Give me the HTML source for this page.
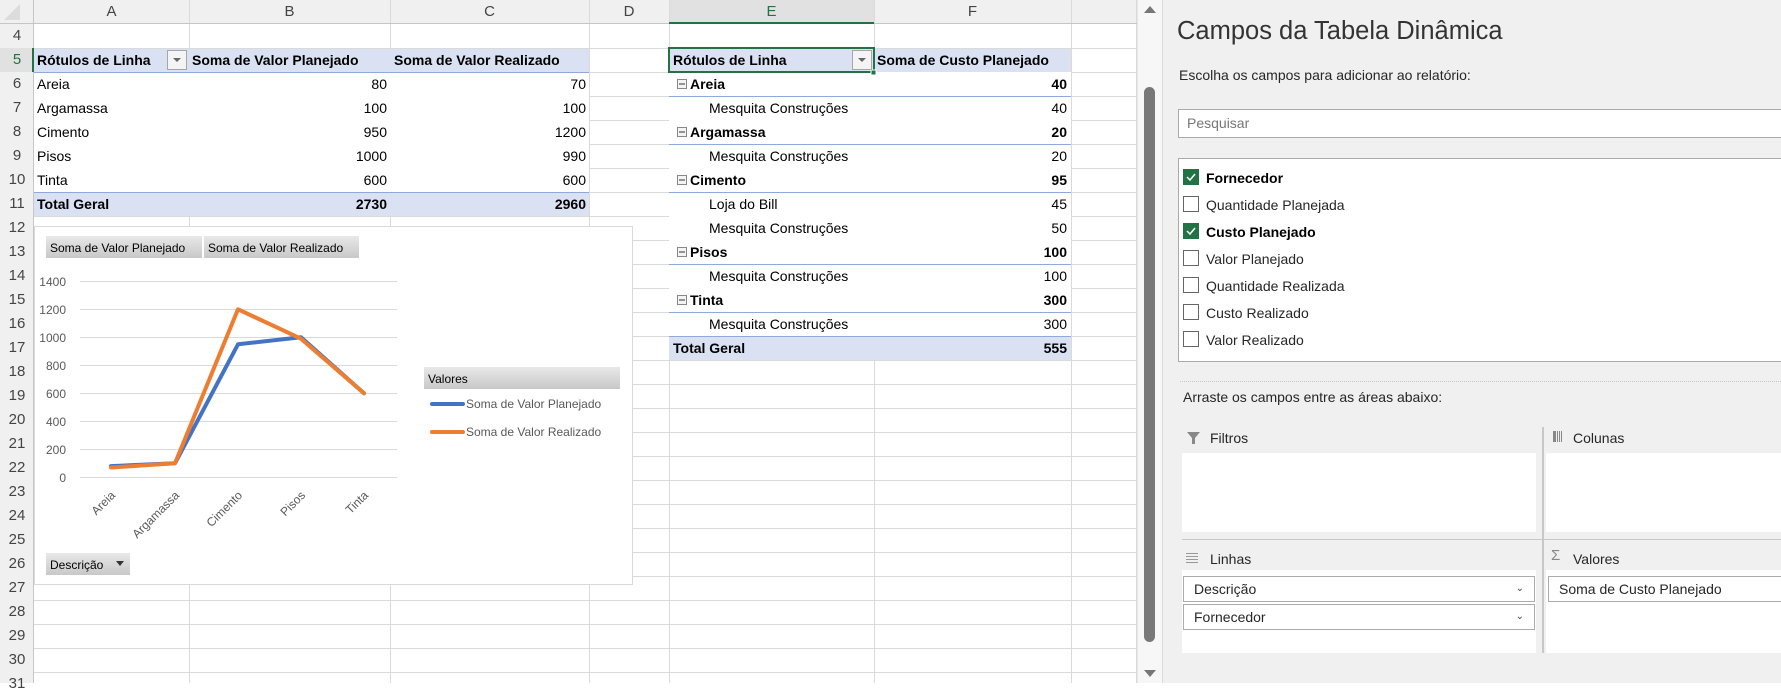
<!DOCTYPE html>
<html><head><meta charset="utf-8">
<style>
*{margin:0;padding:0;box-sizing:border-box}
body{width:1781px;height:683px;overflow:hidden;background:#fff;font-family:"Liberation Sans",Arial,sans-serif;position:relative}
.a{position:absolute;white-space:nowrap}
.t{font-size:14px;color:#000;line-height:24px;height:24px}
.b{font-weight:bold}
.r{text-align:right}
.ch{font-size:15px;color:#444;text-align:center;line-height:24px;top:0;height:24px}
.rh{font-size:15px;color:#444;text-align:center;width:34px;left:0;line-height:24px;height:24px}
.p{color:#262626}
.cb{position:absolute;width:16px;height:16px;border:1px solid #666;background:#fff}
.cb.on{background:#217346;border-color:#217346}
.dd{position:absolute;background:#fff;border:1px solid #ababab;font-size:15px;line-height:24px;padding-left:10px;color:#262626}
</style></head><body>
<svg class="a" style="left:0;top:0" width="1140" height="683">
<rect x="0" y="0" width="1140" height="24" fill="#f0f0f0"/>
<rect x="0" y="0" width="34" height="683" fill="#f0f0f0"/>
<rect x="669" y="0" width="205" height="24" fill="#e1e1e1"/>
<rect x="0" y="48" width="34" height="24" fill="#e1e1e1"/>
<g stroke="#dadada" stroke-width="1">
<line x1="34" y1="48.5" x2="1140" y2="48.5"/>
<line x1="34" y1="72.5" x2="1140" y2="72.5"/>
<line x1="34" y1="96.5" x2="1140" y2="96.5"/>
<line x1="34" y1="120.5" x2="1140" y2="120.5"/>
<line x1="34" y1="144.5" x2="1140" y2="144.5"/>
<line x1="34" y1="168.5" x2="1140" y2="168.5"/>
<line x1="34" y1="192.5" x2="1140" y2="192.5"/>
<line x1="34" y1="216.5" x2="1140" y2="216.5"/>
<line x1="34" y1="240.5" x2="1140" y2="240.5"/>
<line x1="34" y1="264.5" x2="1140" y2="264.5"/>
<line x1="34" y1="288.5" x2="1140" y2="288.5"/>
<line x1="34" y1="312.5" x2="1140" y2="312.5"/>
<line x1="34" y1="336.5" x2="1140" y2="336.5"/>
<line x1="34" y1="360.5" x2="1140" y2="360.5"/>
<line x1="34" y1="384.5" x2="1140" y2="384.5"/>
<line x1="34" y1="408.5" x2="1140" y2="408.5"/>
<line x1="34" y1="432.5" x2="1140" y2="432.5"/>
<line x1="34" y1="456.5" x2="1140" y2="456.5"/>
<line x1="34" y1="480.5" x2="1140" y2="480.5"/>
<line x1="34" y1="504.5" x2="1140" y2="504.5"/>
<line x1="34" y1="528.5" x2="1140" y2="528.5"/>
<line x1="34" y1="552.5" x2="1140" y2="552.5"/>
<line x1="34" y1="576.5" x2="1140" y2="576.5"/>
<line x1="34" y1="600.5" x2="1140" y2="600.5"/>
<line x1="34" y1="624.5" x2="1140" y2="624.5"/>
<line x1="34" y1="648.5" x2="1140" y2="648.5"/>
<line x1="34" y1="672.5" x2="1140" y2="672.5"/>
<line x1="189.5" y1="0" x2="189.5" y2="683"/>
<line x1="390.5" y1="0" x2="390.5" y2="683"/>
<line x1="589.5" y1="0" x2="589.5" y2="683"/>
<line x1="669.5" y1="0" x2="669.5" y2="683"/>
<line x1="874.5" y1="0" x2="874.5" y2="683"/>
<line x1="1071.5" y1="0" x2="1071.5" y2="683"/>
<line x1="1136.5" y1="0" x2="1136.5" y2="683"/>
</g>
<line x1="0" y1="23.5" x2="1140" y2="23.5" stroke="#c6c6c6"/>
<line x1="33.5" y1="0" x2="33.5" y2="683" stroke="#c6c6c6"/>
<line x1="669" y1="23" x2="874" y2="23" stroke="#217346" stroke-width="2"/>
<line x1="33" y1="48" x2="33" y2="72" stroke="#217346" stroke-width="2"/>
<polygon points="4,20 20,20 20,4" fill="#dcdcdc"/>
<!-- pivot 1 -->
<rect x="34" y="49" width="555" height="167" fill="#fff"/>
<rect x="34" y="49" width="555" height="23" fill="#d9e1f2"/>
<rect x="34" y="192" width="555" height="24" fill="#d9e1f2"/>
<line x1="34" y1="72.5" x2="589" y2="72.5" stroke="#8ea9db"/>
<line x1="34" y1="192.5" x2="589" y2="192.5" stroke="#8ea9db"/>
<!-- pivot 2 -->
<rect x="669" y="49" width="402" height="311" fill="#fff"/>
<rect x="669" y="49" width="402" height="23" fill="#d9e1f2"/>
<rect x="669" y="336" width="402" height="24" fill="#d9e1f2"/>
<g stroke="#8ea9db">
<line x1="669" y1="96.5" x2="1071" y2="96.5"/>
<line x1="669" y1="144.5" x2="1071" y2="144.5"/>
<line x1="669" y1="192.5" x2="1071" y2="192.5"/>
<line x1="669" y1="264.5" x2="1071" y2="264.5"/>
<line x1="669" y1="312.5" x2="1071" y2="312.5"/>
<line x1="669" y1="336.5" x2="1071" y2="336.5"/>
</g>
<rect x="669" y="48" width="205" height="24" fill="none" stroke="#217346" stroke-width="2"/>
<rect x="871" y="70" width="5" height="5" fill="#217346" stroke="#fff" stroke-width="1"/>
<rect x="167.5" y="50.5" width="19" height="19" fill="#f4f4f4" stroke="#a6a6a6"/>
<polygon points="173,58 181,58 177,62" fill="#666"/>
<rect x="852.5" y="50.5" width="19" height="19" fill="#f4f4f4" stroke="#a6a6a6"/>
<polygon points="858,58 866,58 862,62" fill="#666"/>
<g fill="#f4f4f4" stroke="#888">
<rect x="677.5" y="79.5" width="9" height="9"/><rect x="677.5" y="127.5" width="9" height="9"/>
<rect x="677.5" y="175.5" width="9" height="9"/><rect x="677.5" y="247.5" width="9" height="9"/>
<rect x="677.5" y="295.5" width="9" height="9"/></g>
<g stroke="#333"><line x1="679" y1="84" x2="685" y2="84"/><line x1="679" y1="132" x2="685" y2="132"/><line x1="679" y1="180" x2="685" y2="180"/><line x1="679" y1="252" x2="685" y2="252"/><line x1="679" y1="300" x2="685" y2="300"/></g>
</svg>
<div class="a ch" style="left:34px;width:155px">A</div>
<div class="a ch" style="left:189px;width:201px">B</div>
<div class="a ch" style="left:390px;width:199px">C</div>
<div class="a ch" style="left:589px;width:80px">D</div>
<div class="a ch" style="left:669px;width:205px;color:#217346">E</div>
<div class="a ch" style="left:874px;width:197px">F</div>
<div class="a rh" style="top:24px">4</div><div class="a rh" style="top:48px;color:#217346">5</div>
<div class="a rh" style="top:72px">6</div><div class="a rh" style="top:96px">7</div>
<div class="a rh" style="top:120px">8</div><div class="a rh" style="top:144px">9</div>
<div class="a rh" style="top:168px">10</div><div class="a rh" style="top:192px">11</div>
<div class="a rh" style="top:216px">12</div><div class="a rh" style="top:240px">13</div>
<div class="a rh" style="top:264px">14</div><div class="a rh" style="top:288px">15</div>
<div class="a rh" style="top:312px">16</div><div class="a rh" style="top:336px">17</div>
<div class="a rh" style="top:360px">18</div><div class="a rh" style="top:384px">19</div>
<div class="a rh" style="top:408px">20</div><div class="a rh" style="top:432px">21</div>
<div class="a rh" style="top:456px">22</div><div class="a rh" style="top:480px">23</div>
<div class="a rh" style="top:504px">24</div><div class="a rh" style="top:528px">25</div>
<div class="a rh" style="top:552px">26</div><div class="a rh" style="top:576px">27</div>
<div class="a rh" style="top:600px">28</div><div class="a rh" style="top:624px">29</div>
<div class="a rh" style="top:648px">30</div><div class="a rh" style="top:672px">31</div>
<div class="a t b" style="left:37px;top:48px">Rótulos de Linha</div>
<div class="a t b" style="left:192px;top:48px">Soma de Valor Planejado</div>
<div class="a t b" style="left:394px;top:48px">Soma de Valor Realizado</div>
<div class="a t" style="left:37px;top:72px">Areia</div>
<div class="a t" style="left:37px;top:96px">Argamassa</div>
<div class="a t" style="left:37px;top:120px">Cimento</div>
<div class="a t" style="left:37px;top:144px">Pisos</div>
<div class="a t" style="left:37px;top:168px">Tinta</div>
<div class="a t b" style="left:37px;top:192px">Total Geral</div>
<div class="a t r" style="left:190px;width:197px;top:72px">80</div>
<div class="a t r" style="left:190px;width:197px;top:96px">100</div>
<div class="a t r" style="left:190px;width:197px;top:120px">950</div>
<div class="a t r" style="left:190px;width:197px;top:144px">1000</div>
<div class="a t r" style="left:190px;width:197px;top:168px">600</div>
<div class="a t r b" style="left:190px;width:197px;top:192px">2730</div>
<div class="a t r" style="left:390px;width:196px;top:72px">70</div>
<div class="a t r" style="left:390px;width:196px;top:96px">100</div>
<div class="a t r" style="left:390px;width:196px;top:120px">1200</div>
<div class="a t r" style="left:390px;width:196px;top:144px">990</div>
<div class="a t r" style="left:390px;width:196px;top:168px">600</div>
<div class="a t r b" style="left:390px;width:196px;top:192px">2960</div>
<div class="a t b" style="left:673px;top:48px">Rótulos de Linha</div>
<div class="a t b" style="left:877px;top:48px">Soma de Custo Planejado</div>
<div class="a t b" style="left:690px;top:72px">Areia</div>
<div class="a t" style="left:709px;top:96px">Mesquita Construções</div>
<div class="a t b" style="left:690px;top:120px">Argamassa</div>
<div class="a t" style="left:709px;top:144px">Mesquita Construções</div>
<div class="a t b" style="left:690px;top:168px">Cimento</div>
<div class="a t" style="left:709px;top:192px">Loja do Bill</div>
<div class="a t" style="left:709px;top:216px">Mesquita Construções</div>
<div class="a t b" style="left:690px;top:240px">Pisos</div>
<div class="a t" style="left:709px;top:264px">Mesquita Construções</div>
<div class="a t b" style="left:690px;top:288px">Tinta</div>
<div class="a t" style="left:709px;top:312px">Mesquita Construções</div>
<div class="a t b" style="left:673px;top:336px">Total Geral</div>
<div class="a t r b" style="left:874px;width:193px;top:72px">40</div>
<div class="a t r" style="left:874px;width:193px;top:96px">40</div>
<div class="a t r b" style="left:874px;width:193px;top:120px">20</div>
<div class="a t r" style="left:874px;width:193px;top:144px">20</div>
<div class="a t r b" style="left:874px;width:193px;top:168px">95</div>
<div class="a t r" style="left:874px;width:193px;top:192px">45</div>
<div class="a t r" style="left:874px;width:193px;top:216px">50</div>
<div class="a t r b" style="left:874px;width:193px;top:240px">100</div>
<div class="a t r" style="left:874px;width:193px;top:264px">100</div>
<div class="a t r b" style="left:874px;width:193px;top:288px">300</div>
<div class="a t r" style="left:874px;width:193px;top:312px">300</div>
<div class="a t r b" style="left:874px;width:193px;top:336px">555</div>
<svg class="a" style="left:34px;top:226px" width="600" height="360" font-family="Liberation Sans, Arial, sans-serif">
<defs><linearGradient id="g" x1="0" y1="0" x2="0" y2="1"><stop offset="0" stop-color="#e8e8e8"/><stop offset="1" stop-color="#c8c8c8"/></linearGradient></defs>
<rect x="0.5" y="0.5" width="598" height="358" fill="#fff" stroke="#d9d9d9"/>
<rect x="12" y="10" width="156" height="22" fill="url(#g)"/>
<rect x="170" y="10" width="155" height="22" fill="url(#g)"/>
<text x="16" y="26" font-size="12" fill="#000">Soma de Valor Planejado</text>
<text x="174" y="26" font-size="12" fill="#000">Soma de Valor Realizado</text>
<g stroke="#d9d9d9"><line x1="46" y1="55.5" x2="363" y2="55.5"/><line x1="46" y1="83.5" x2="363" y2="83.5"/><line x1="46" y1="111.5" x2="363" y2="111.5"/><line x1="46" y1="139.5" x2="363" y2="139.5"/><line x1="46" y1="167.5" x2="363" y2="167.5"/><line x1="46" y1="195.5" x2="363" y2="195.5"/><line x1="46" y1="223.5" x2="363" y2="223.5"/><line x1="46" y1="251.5" x2="363" y2="251.5"/></g>
<g font-size="12" fill="#595959" text-anchor="end">
<text x="32" y="60">1400</text><text x="32" y="88">1200</text><text x="32" y="116">1000</text><text x="32" y="144">800</text><text x="32" y="172">600</text><text x="32" y="200">400</text><text x="32" y="228">200</text><text x="32" y="256">0</text></g>
<polyline points="77,240.1 141,237.3 204,118.3 267,111.3 330,167.3" fill="none" stroke="#4472c4" stroke-width="4" stroke-linejoin="round" stroke-linecap="round"/>
<polyline points="77,241.5 141,237.3 204,83.3 267,112.7 330,167.3" fill="none" stroke="#ed7d31" stroke-width="4" stroke-linejoin="round" stroke-linecap="round"/>
<g font-size="12" fill="#595959" text-anchor="end">
<text transform="translate(82,270) rotate(-45)">Areia</text>
<text transform="translate(146,270) rotate(-45)">Argamassa</text>
<text transform="translate(209,270) rotate(-45)">Cimento</text>
<text transform="translate(272,270) rotate(-45)">Pisos</text>
<text transform="translate(335,270) rotate(-45)">Tinta</text></g>
<rect x="390" y="141" width="196" height="22" fill="url(#g)"/>
<text x="394" y="157" font-size="12" fill="#000">Valores</text>
<line x1="398" y1="178" x2="429" y2="178" stroke="#4472c4" stroke-width="4" stroke-linecap="round"/>
<line x1="398" y1="206" x2="429" y2="206" stroke="#ed7d31" stroke-width="4" stroke-linecap="round"/>
<text x="432" y="182" font-size="12" fill="#595959">Soma de Valor Planejado</text>
<text x="432" y="210" font-size="12" fill="#595959">Soma de Valor Realizado</text>
<rect x="12" y="327" width="84" height="22" fill="url(#g)"/>
<text x="16" y="343" font-size="12" fill="#000">Descrição</text>
<polygon points="82,335 90,335 86,340" fill="#333"/>
</svg>
<div class="a" style="left:1137px;top:0;width:25px;height:683px;background:#f7f7f7;border-left:1px solid #e6e6e6"></div>
<div class="a" style="left:1144px;top:87px;width:11px;height:555px;background:#787878;border-radius:6px"></div>
<svg class="a" style="left:1142px;top:4px" width="16" height="10"><polygon points="2,9 14,9 8,2" fill="#777"/></svg>
<svg class="a" style="left:1142px;top:669px" width="16" height="10"><polygon points="2,1 14,1 8,8" fill="#777"/></svg>
<div class="a" style="left:1162px;top:0;width:619px;height:683px;background:#f0f0f0;border-left:1px solid #dcdcdc"></div>
<div class="a p" style="left:1177px;top:14px;font-size:25.5px;line-height:34px;color:#333">Campos da Tabela Dinâmica</div>
<div class="a p" style="left:1179px;top:66px;font-size:14px;line-height:18px">Escolha os campos para adicionar ao relatório:</div>
<div class="a" style="left:1178px;top:109px;width:610px;height:29px;background:#fff;border:1px solid #ababab;font-size:14px;line-height:27px;padding-left:8px;color:#777">Pesquisar</div>
<div class="a" style="left:1178px;top:158px;width:610px;height:204px;background:#fff;border:1px solid #ababab"></div>
<div class="cb on" style="left:1183px;top:169px"></div>
<div class="cb" style="left:1183px;top:196px"></div>
<div class="cb on" style="left:1183px;top:223px"></div>
<div class="cb" style="left:1183px;top:250px"></div>
<div class="cb" style="left:1183px;top:277px"></div>
<div class="cb" style="left:1183px;top:304px"></div>
<div class="cb" style="left:1183px;top:331px"></div>
<svg class="a" style="left:1183px;top:169px" width="16" height="70"><g fill="none" stroke="#fff" stroke-width="1.5"><polyline points="4,8 7,11 12,5"/><polyline points="4,62 7,65 12,59"/></g></svg>
<div class="a p b" style="left:1206px;top:168px;font-size:14px;line-height:20px;color:#000">Fornecedor</div>
<div class="a p" style="left:1206px;top:195px;font-size:14px;line-height:20px">Quantidade Planejada</div>
<div class="a p b" style="left:1206px;top:222px;font-size:14px;line-height:20px;color:#000">Custo Planejado</div>
<div class="a p" style="left:1206px;top:249px;font-size:14px;line-height:20px">Valor Planejado</div>
<div class="a p" style="left:1206px;top:276px;font-size:14px;line-height:20px">Quantidade Realizada</div>
<div class="a p" style="left:1206px;top:303px;font-size:14px;line-height:20px">Custo Realizado</div>
<div class="a p" style="left:1206px;top:330px;font-size:14px;line-height:20px">Valor Realizado</div>
<div class="a" style="left:1180px;top:381px;width:601px;border-top:1px dotted #c8c8c8"></div>
<div class="a p" style="left:1183px;top:388px;font-size:14px;line-height:18px">Arraste os campos entre as áreas abaixo:</div>
<svg class="a" style="left:1186px;top:430px" width="16" height="16"><polygon points="1,2 14,2 9,8 9,14 6,14 6,8" fill="#888"/></svg>
<div class="a p" style="left:1210px;top:428px;font-size:14px;line-height:20px">Filtros</div>
<div class="a" style="left:1182px;top:453px;width:354px;height:79px;background:#fff"></div>
<div class="a" style="left:1542px;top:427px;width:2px;height:226px;background:#c8c8c8"></div>
<div class="a" style="left:1182px;top:539px;width:599px;height:1px;background:#c8c8c8"></div>
<svg class="a" style="left:1552px;top:430px" width="14" height="14"><g fill="#888"><rect x="1" y="1" width="3" height="11"/><rect x="5" y="1" width="1" height="11"/><rect x="7" y="1" width="1" height="11"/><rect x="9" y="1" width="1" height="11"/></g></svg>
<div class="a p" style="left:1573px;top:428px;font-size:14px;line-height:20px">Colunas</div>
<div class="a" style="left:1546px;top:453px;width:235px;height:79px;background:#fff"></div>
<svg class="a" style="left:1186px;top:552px" width="14" height="12"><g fill="#999"><rect x="0" y="1" width="12" height="1"/><rect x="0" y="4" width="12" height="1"/><rect x="0" y="7" width="12" height="1"/><rect x="0" y="10" width="12" height="1"/></g></svg>
<div class="a p" style="left:1210px;top:549px;font-size:14px;line-height:20px">Linhas</div>
<div class="a" style="left:1182px;top:570px;width:354px;height:83px;background:#fff"></div>
<div class="a p" style="left:1551px;top:546px;font-size:15px;line-height:20px;color:#888">Σ</div>
<div class="a p" style="left:1573px;top:549px;font-size:14px;line-height:20px">Valores</div>
<div class="a" style="left:1546px;top:570px;width:235px;height:83px;background:#fff"></div>
<div class="dd" style="left:1183px;top:576px;width:352px;height:26px;font-size:14px">Descrição<span style="position:absolute;right:10px;top:0;font-size:10px;color:#444">&#8964;</span></div>
<div class="dd" style="left:1183px;top:604px;width:352px;height:26px;font-size:14px">Fornecedor<span style="position:absolute;right:10px;top:0;font-size:10px;color:#444">&#8964;</span></div>
<div class="dd" style="left:1548px;top:576px;width:240px;height:26px;font-size:14px">Soma de Custo Planejado</div>
</body></html>
